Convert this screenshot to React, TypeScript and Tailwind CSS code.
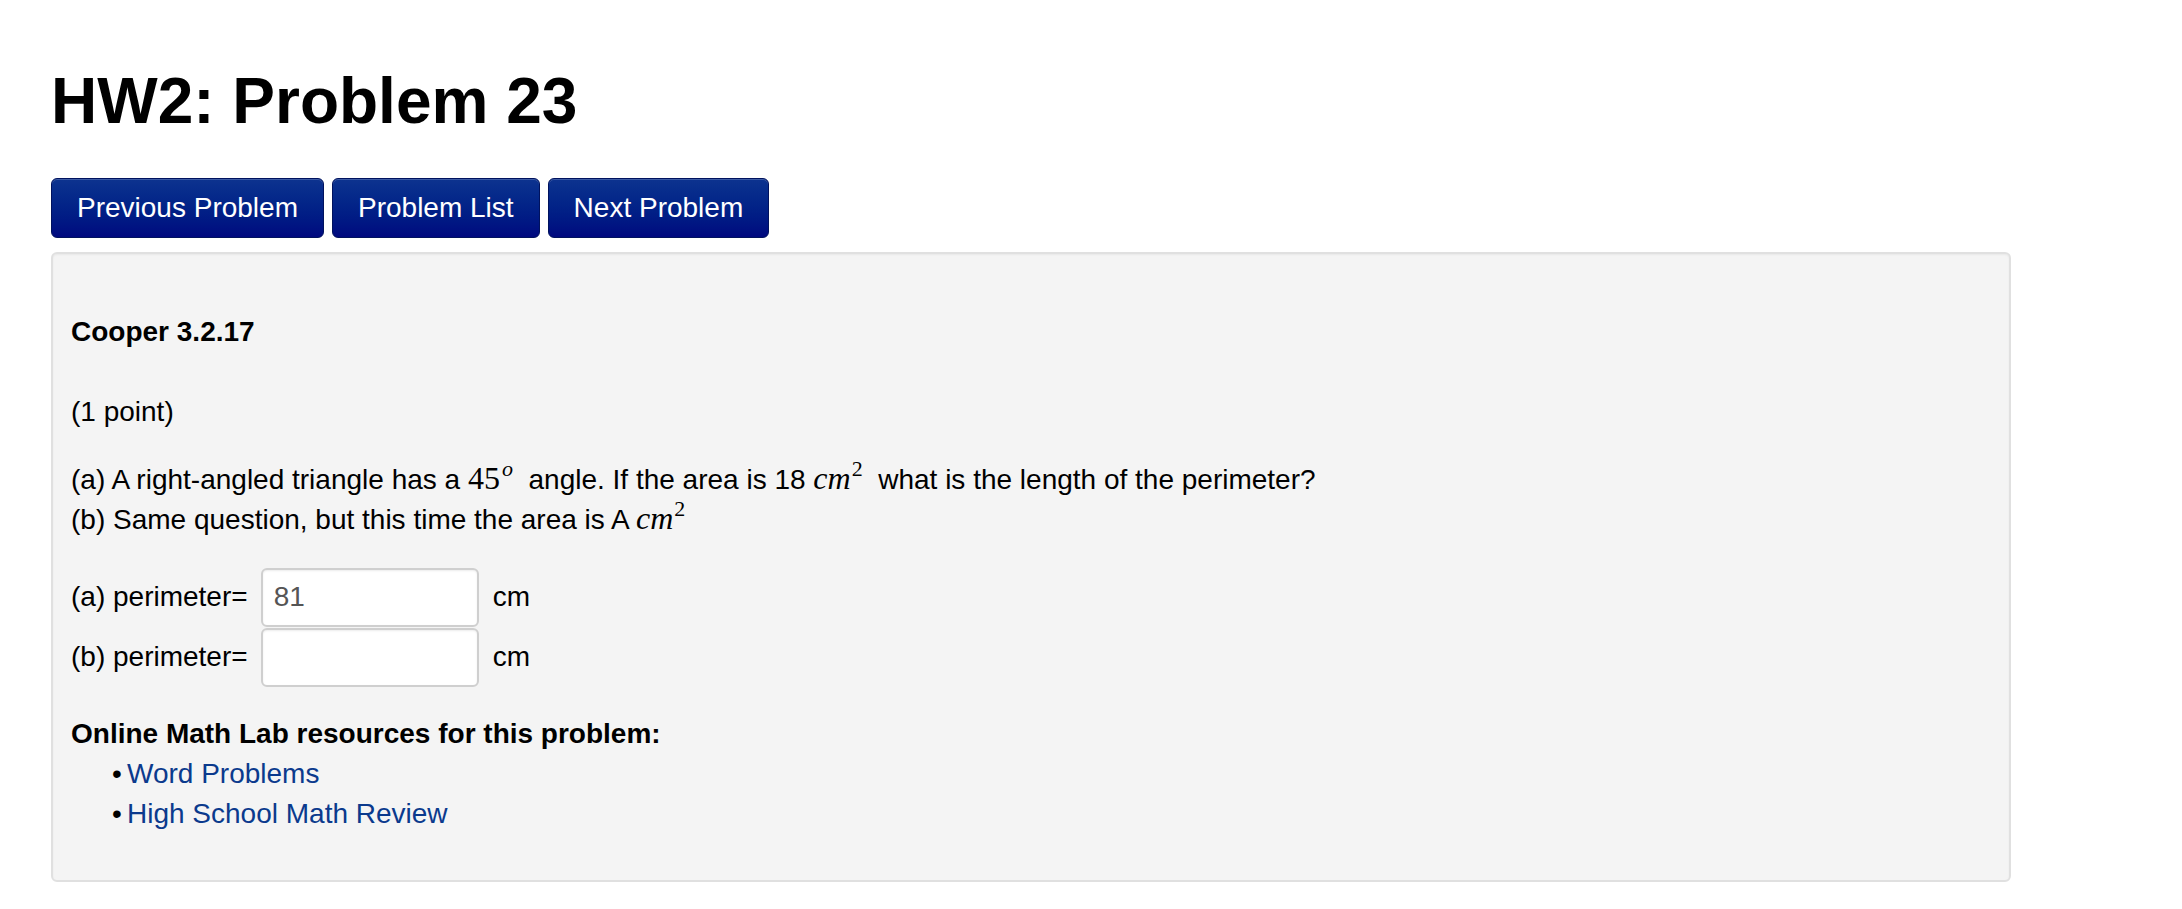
import React from "react";

const sans = { fontFamily: '"Liberation Sans", Arial, Helvetica, sans-serif' };

function Cm() {
  return (
    <span className="font-['Liberation_Serif',serif] italic text-[32px] leading-none">
      cm<sup className="not-italic text-[22px] leading-none relative -top-[13px] align-baseline ml-[1px]">2</sup>
    </span>
  );
}

function NavButton({ children }: { children: React.ReactNode }) {
  return (
    <button className="h-[60px] px-[25px] rounded-[6px] border border-[#00125e] bg-gradient-to-b from-[#0d338f] to-[#00087f] text-white text-[28px] leading-none shadow-[inset_0_1px_0_rgba(255,255,255,0.2)]">
      {children}
    </button>
  );
}

function AnswerRow({ label, value }: { label: string; value: string }) {
  return (
    <div className="flex items-center h-[60px]">
      <span className="leading-[40px]">{label}</span>
      <input
        readOnly
        value={value}
        className="h-[59px] w-[218px] ml-[13px] rounded-[6px] border-2 border-[#cfcfcf] bg-white px-[11px] text-[28px] text-[#555] shadow-[inset_0_1px_2px_rgba(0,0,0,0.08)] outline-none"
        style={sans}
      />
      <span className="ml-[14px] leading-[40px]">cm</span>
    </div>
  );
}

export default function App() {
  return (
    <div className="min-h-[909px] bg-white text-black px-[51px] pt-[69px]" style={sans}>
      <h1 className="text-[64px] leading-[64px] font-bold">HW2: Problem 23</h1>
      <div className="mt-[45px] flex gap-[8px]">
        <NavButton>Previous Problem</NavButton>
        <NavButton>Problem List</NavButton>
        <NavButton>Next Problem</NavButton>
      </div>
      <div className="mt-[14px] w-[1960px] rounded-[6px] border-2 border-[#e0e0e0] bg-[#f4f4f4] px-[18px] pt-[58px] pb-[46px] text-[28px] leading-[40px] shadow-[inset_0_1px_2px_rgba(0,0,0,0.05)]">
        <div className="font-bold">Cooper 3.2.17</div>
        <div className="mt-[40px]">(1 point)</div>
        <div className="mt-[28px]">
          <div className="h-[40px]">
            (a) A right-angled triangle has a{" "}
            <span className="font-['Liberation_Serif',serif] text-[32px] leading-none">
              45<sup className="italic text-[22px] leading-none relative -top-[13px] align-baseline ml-[2px]">o</sup>
            </span>{" "}
            &nbsp;angle. If the area is 18 <Cm />{" "}
            &nbsp;what is the length of the perimeter?
          </div>
          <div className="h-[40px]">
            (b) Same question, but this time the area is A <Cm />
          </div>
        </div>
        <div className="mt-[27px] flex flex-col">
          <AnswerRow label="(a) perimeter=" value="81" />
          <AnswerRow label="(b) perimeter=" value="" />
        </div>
        <div className="mt-[27px] font-bold">Online Math Lab resources for this problem:</div>
        <ul className="pl-[41px]">
          <li className="flex">
            <span className="w-[15px]">•</span>
            <a className="text-[#0b3a8d]" href="#">Word Problems</a>
          </li>
          <li className="flex">
            <span className="w-[15px]">•</span>
            <a className="text-[#0b3a8d]" href="#">High School Math Review</a>
          </li>
        </ul>
      </div>
    </div>
  );
}
